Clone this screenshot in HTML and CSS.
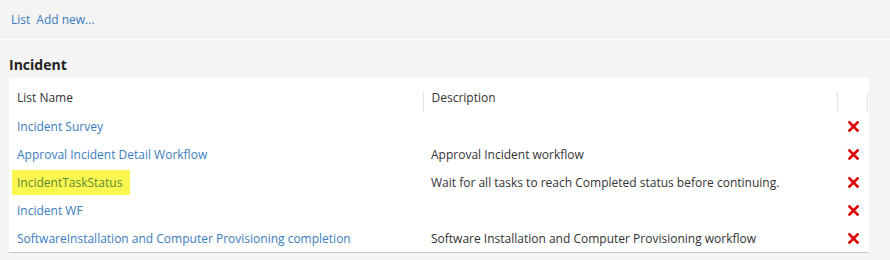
FILE: index.html
```html
<!DOCTYPE html>
<html>
<head>
<meta charset="utf-8">
<link rel="stylesheet" href="styles.css">
</head>
<body>
<div class="toolbar">
  <a class="tlink" href="#">List</a>
  <a class="tlink" href="#">Add new...</a>
</div>
<div class="content">
  <h2 class="title">Incident</h2>
  <div class="panel">
    <table class="grid">
      <thead>
        <tr>
          <th class="c-name">List Name</th>
          <th class="c-desc">Description</th>
          <th class="c-del"></th>
        </tr>
      </thead>
      <tbody>
        <tr>
          <td class="c-name"><a href="#">Incident Survey</a></td>
          <td class="c-desc"></td>
          <td class="c-del"><svg class="x" viewBox="0 0 12 12"><path d="M1.5 1.5L10.5 10.5M10.5 1.5L1.5 10.5"/></svg></td>
        </tr>
        <tr>
          <td class="c-name"><a href="#">Approval Incident Detail Workflow</a></td>
          <td class="c-desc">Approval Incident workflow</td>
          <td class="c-del"><svg class="x" viewBox="0 0 12 12"><path d="M1.5 1.5L10.5 10.5M10.5 1.5L1.5 10.5"/></svg></td>
        </tr>
        <tr>
          <td class="c-name"><a href="#" class="hl">IncidentTaskStatus</a></td>
          <td class="c-desc">Wait for all tasks to reach Completed status before continuing.</td>
          <td class="c-del"><svg class="x" viewBox="0 0 12 12"><path d="M1.5 1.5L10.5 10.5M10.5 1.5L1.5 10.5"/></svg></td>
        </tr>
        <tr>
          <td class="c-name"><a href="#">Incident WF</a></td>
          <td class="c-desc"></td>
          <td class="c-del"><svg class="x" viewBox="0 0 12 12"><path d="M1.5 1.5L10.5 10.5M10.5 1.5L1.5 10.5"/></svg></td>
        </tr>
        <tr>
          <td class="c-name"><a href="#">SoftwareInstallation and Computer Provisioning completion</a></td>
          <td class="c-desc">Software Installation and Computer Provisioning workflow</td>
          <td class="c-del"><svg class="x" viewBox="0 0 12 12"><path d="M1.5 1.5L10.5 10.5M10.5 1.5L1.5 10.5"/></svg></td>
        </tr>
      </tbody>
    </table>
  </div>
</div>
</body>
</html>
```
FILE: styles.css
```css
html, body {
  margin: 0;
  padding: 0;
  background: #f4f4f4;
  font-family: "Open Sans", "Noto Sans", sans-serif;
  font-size: 12px;
  color: #333;
}
.toolbar {
  height: 40px;
  box-sizing: border-box;
  padding: 11px 0 0 11px;
  border-bottom: 1px solid #ffffff;
  display: flex;
  gap: 6px;
  line-height: 18px;
}
.tlink {
  color: #3a7cc0;
  text-decoration: none;
}
.content {
  padding: 15px 21px 0 9px;
}
.title {
  margin: 0;
  font-size: 14px;
  font-weight: bold;
  color: #222;
  line-height: 20px;
  height: 23px;
}
.panel {
  background: #fff;
  border-bottom: 1px solid #c6c6c6;
  padding: 14px 2px 0 0;
}
.grid {
  width: 100%;
  border-collapse: collapse;
  table-layout: fixed;
}
.grid th {
  font-weight: normal;
  text-align: left;
  color: #333;
  height: 20px;
  box-sizing: border-box;
  padding: 0 0 8px 8px;
  line-height: 12px;
  vertical-align: top;
  border-left: 1px solid #e4e4e4;
}
.grid th.c-name { border-left: none; width: 414px; }
.grid th.c-desc { width: 414px; }
.grid th.c-del { border-right: 1px solid #e4e4e4; width: 30px; }
.grid td {
  height: 28px;
  padding: 0 0 0 8px;
  vertical-align: middle;
  white-space: nowrap;
}
.grid td a {
  color: #3a7cc0;
  text-decoration: none;
}
.grid td a.hl {
  background: #fcf74f;
  color: #5a8a3a;
  padding: 4px 8px 4px 5px;
  margin-left: -5px;
}
.grid td.c-del {
  padding: 0 0 0 10px;
}
.x {
  display: block;
  width: 13px;
  height: 13px;
  margin-top: 1px;
}
.x path {
  stroke: #e00000;
  stroke-width: 2.6;
  fill: none;
}
```
